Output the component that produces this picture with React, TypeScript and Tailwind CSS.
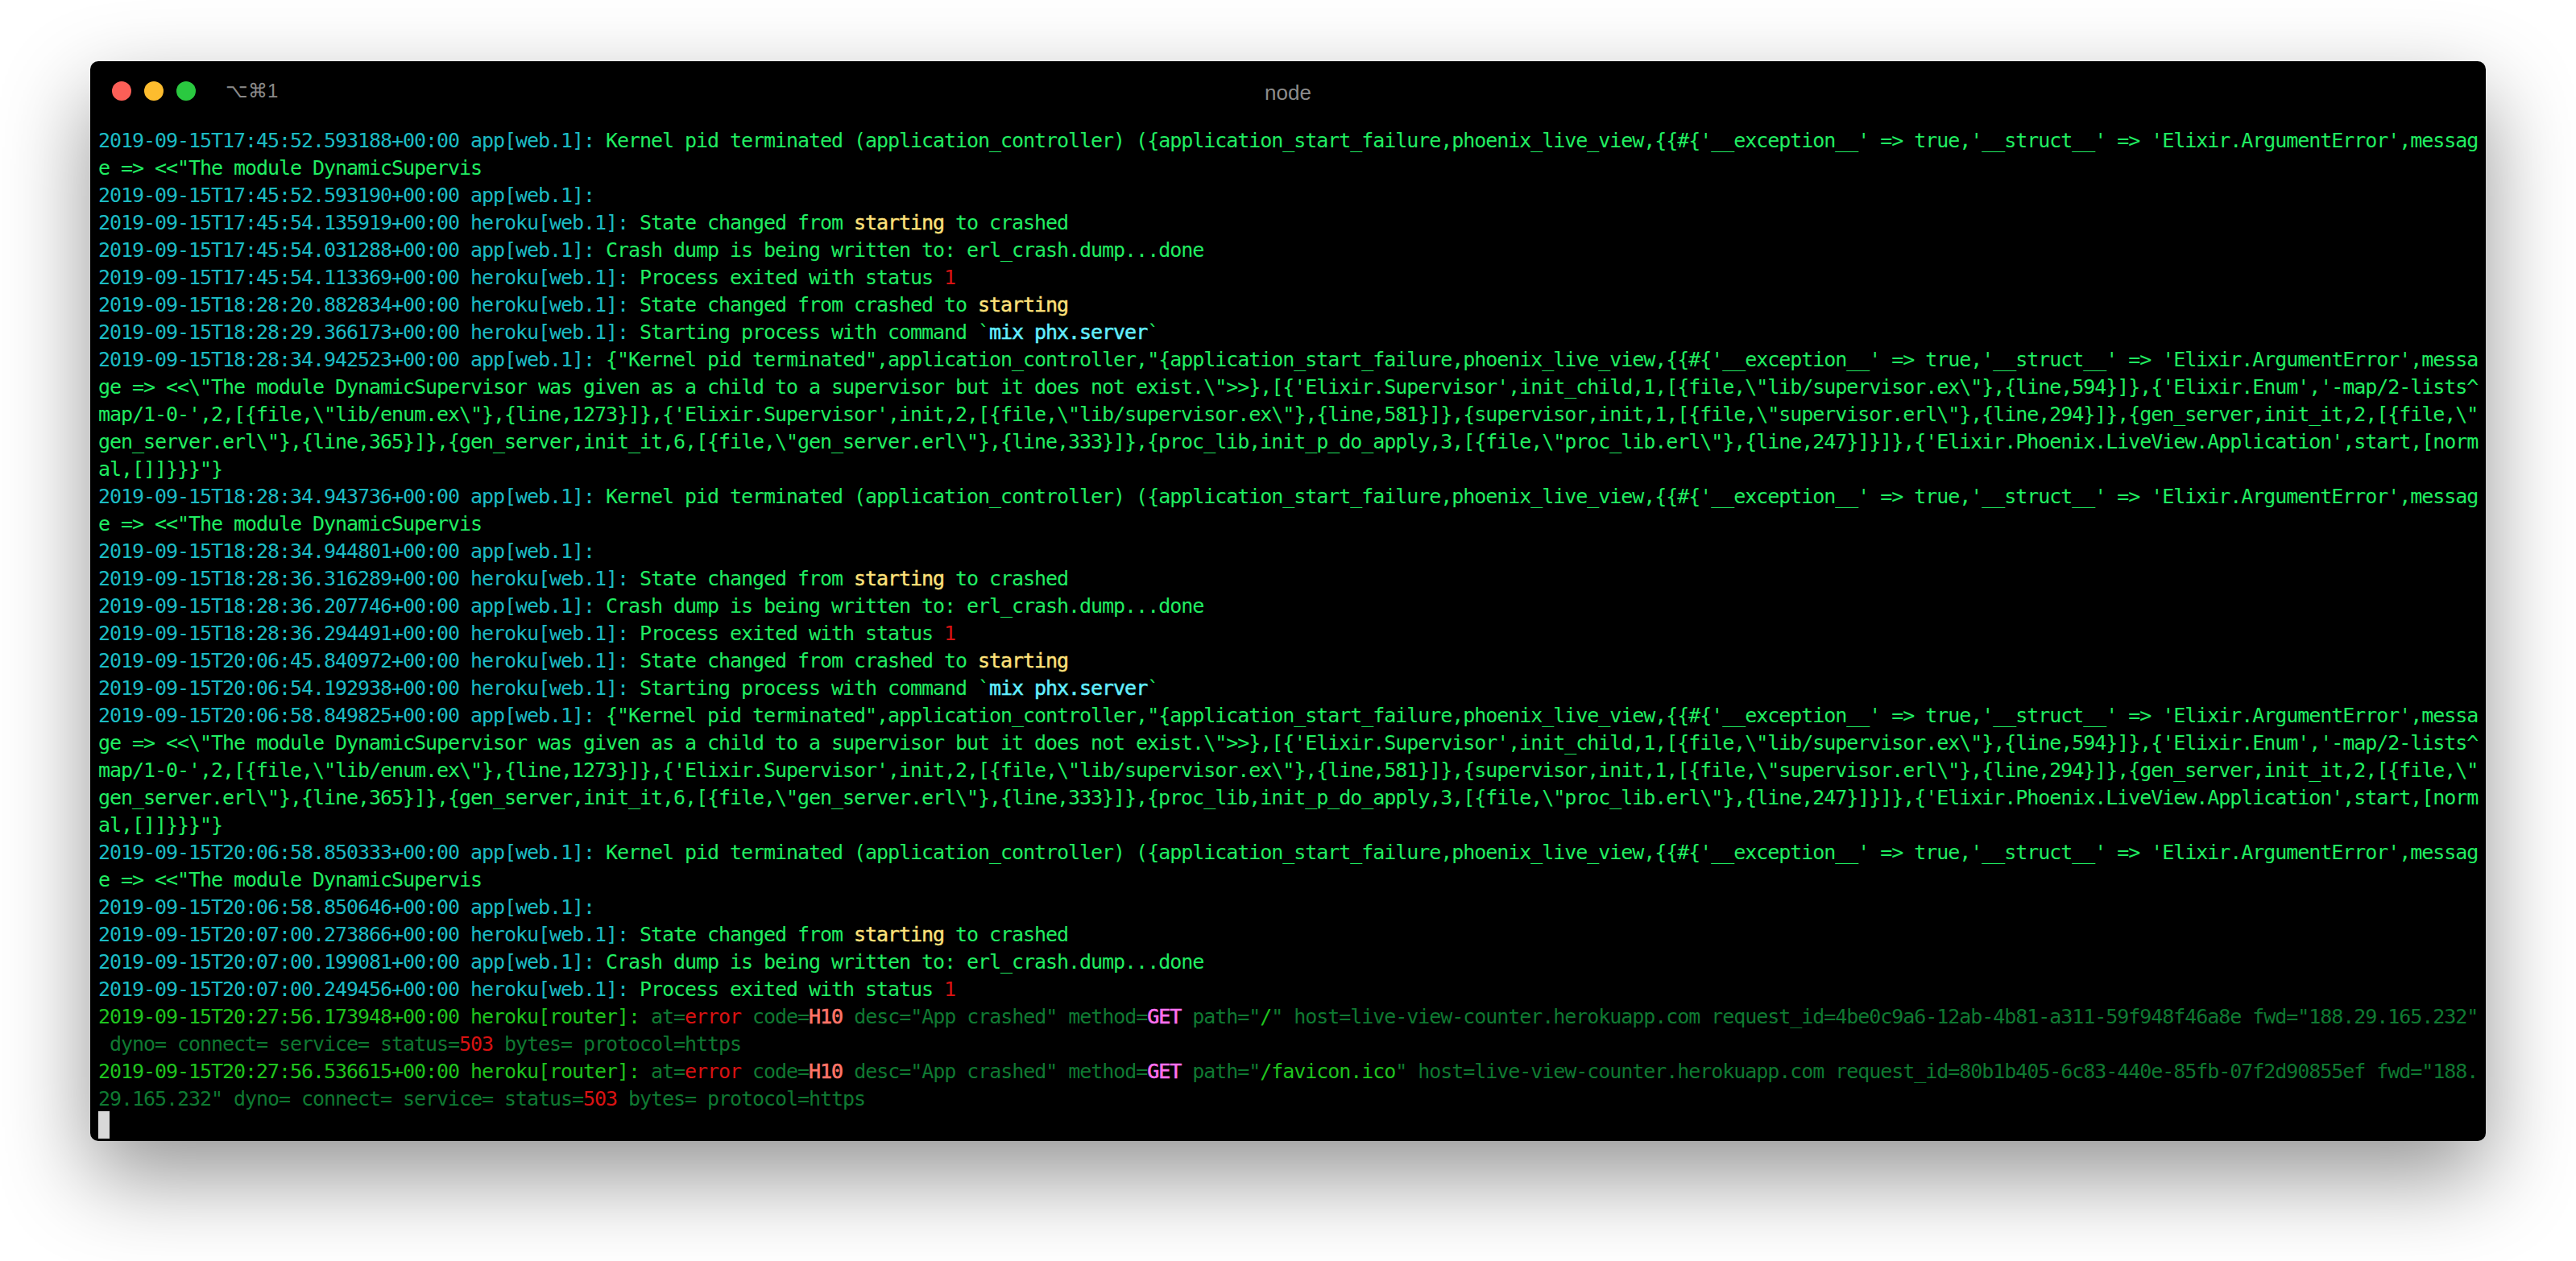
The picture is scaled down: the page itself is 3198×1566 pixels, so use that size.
const Ts = ({ children, dim }: { children: React.ReactNode; dim?: boolean }) => (
  <span className={dim ? 'text-[#1fc41f]' : 'text-[#1cbcc4]'}>{children}</span>
);

const Y = ({ children }: { children: React.ReactNode }) => (
  <span className="text-[#ffe27a] [-webkit-text-stroke:0.4px_#ffe27a]">{children}</span>
);
const R = ({ children }: { children: React.ReactNode }) => (
  <span className="text-[#d81212]">{children}</span>
);
const B = ({ children }: { children: React.ReactNode }) => (
  <span className="text-[#62eeff] [-webkit-text-stroke:0.5px_#62eeff]">{children}</span>
);
const H = ({ children }: { children: React.ReactNode }) => (
  <span className="text-[#ff7468] [-webkit-text-stroke:0.6px_#ff7468]">{children}</span>
);
const G = ({ children }: { children: React.ReactNode }) => (
  <span className="text-[#ff70f0] [-webkit-text-stroke:0.6px_#ff70f0]">{children}</span>
);

const Line = ({ children, dim }: { children: React.ReactNode; dim?: boolean }) => (
  <div className={`h-[34px] whitespace-pre ${dim ? 'text-[#0f7a32]' : 'text-[#20ee62]'}`}>{children}</div>
);

const kernelOne = " Kernel pid terminated (application_controller) ({application_start_failure,phoenix_live_view,{{#{'__exception__' => true,'__struct__' => 'Elixir.ArgumentError',messag";
const kernelBlock = (
  <>
    <Line>{`ge => <<\\"The module DynamicSupervisor was given as a child to a supervisor but it does not exist.\\">>},[{'Elixir.Supervisor',init_child,1,[{file,\\"lib/supervisor.ex\\"},{line,594}]},{'Elixir.Enum','-map/2-lists^`}</Line>
    <Line>{`map/1-0-',2,[{file,\\"lib/enum.ex\\"},{line,1273}]},{'Elixir.Supervisor',init,2,[{file,\\"lib/supervisor.ex\\"},{line,581}]},{supervisor,init,1,[{file,\\"supervisor.erl\\"},{line,294}]},{gen_server,init_it,2,[{file,\\"`}</Line>
    <Line>{`gen_server.erl\\"},{line,365}]},{gen_server,init_it,6,[{file,\\"gen_server.erl\\"},{line,333}]},{proc_lib,init_p_do_apply,3,[{file,\\"proc_lib.erl\\"},{line,247}]}]},{'Elixir.Phoenix.LiveView.Application',start,[norm`}</Line>
    <Line>{`al,[]]}}}"}`}</Line>
  </>
);
const kernelTwo = ` {"Kernel pid terminated",application_controller,"{application_start_failure,phoenix_live_view,{{#{'__exception__' => true,'__struct__' => 'Elixir.ArgumentError',messa`;

export default function App() {
  return (
    <div className="min-h-[1566px] w-[3198px] overflow-hidden bg-white pl-[112px] pt-[76px]">
      <div className="h-[1341px] w-[2974px] rounded-[10px] bg-black shadow-[0_44px_110px_rgba(0,0,0,0.42)] font-['DejaVu_Sans_Mono',monospace] text-[25px] tracking-[-1.05px]">
        <div className="flex h-[80px] items-center pl-[27px] pb-[6px] relative">
          <div className="flex gap-[16px]">
            <span className="size-6 rounded-full bg-[#fc5f57]" />
            <span className="size-6 rounded-full bg-[#fdbc2e]" />
            <span className="size-6 rounded-full bg-[#2ac940]" />
          </div>
          <span className="ml-[37px] font-['Liberation_Sans',sans-serif] text-[24px] leading-[30px] tracking-normal text-[#8a8a8a]">⌥⌘1</span>
          <span className="absolute left-0 right-0 top-[20px] text-center font-['Liberation_Sans',sans-serif] text-[26px] tracking-normal text-[#8c8c8c]">node</span>
        </div>
        <div className="pl-[10px] leading-[38px]">
          <Line><Ts>2019-09-15T17:45:52.593188+00:00 app[web.1]:</Ts>{kernelOne}</Line>
          <Line>{`e => <<"The module DynamicSupervis`}</Line>
          <Line><Ts>2019-09-15T17:45:52.593190+00:00 app[web.1]:</Ts></Line>
          <Line><Ts>2019-09-15T17:45:54.135919+00:00 heroku[web.1]:</Ts> State changed from <Y>starting</Y> to crashed</Line>
          <Line><Ts>2019-09-15T17:45:54.031288+00:00 app[web.1]:</Ts> Crash dump is being written to: erl_crash.dump...done</Line>
          <Line><Ts>2019-09-15T17:45:54.113369+00:00 heroku[web.1]:</Ts> Process exited with status <R>1</R></Line>
          <Line><Ts>2019-09-15T18:28:20.882834+00:00 heroku[web.1]:</Ts> State changed from crashed to <Y>starting</Y></Line>
          <Line><Ts>2019-09-15T18:28:29.366173+00:00 heroku[web.1]:</Ts> Starting process with command `<B>mix phx.server</B>`</Line>
          <Line><Ts>2019-09-15T18:28:34.942523+00:00 app[web.1]:</Ts>{kernelTwo}</Line>
          {kernelBlock}
          <Line><Ts>2019-09-15T18:28:34.943736+00:00 app[web.1]:</Ts>{kernelOne}</Line>
          <Line>{`e => <<"The module DynamicSupervis`}</Line>
          <Line><Ts>2019-09-15T18:28:34.944801+00:00 app[web.1]:</Ts></Line>
          <Line><Ts>2019-09-15T18:28:36.316289+00:00 heroku[web.1]:</Ts> State changed from <Y>starting</Y> to crashed</Line>
          <Line><Ts>2019-09-15T18:28:36.207746+00:00 app[web.1]:</Ts> Crash dump is being written to: erl_crash.dump...done</Line>
          <Line><Ts>2019-09-15T18:28:36.294491+00:00 heroku[web.1]:</Ts> Process exited with status <R>1</R></Line>
          <Line><Ts>2019-09-15T20:06:45.840972+00:00 heroku[web.1]:</Ts> State changed from crashed to <Y>starting</Y></Line>
          <Line><Ts>2019-09-15T20:06:54.192938+00:00 heroku[web.1]:</Ts> Starting process with command `<B>mix phx.server</B>`</Line>
          <Line><Ts>2019-09-15T20:06:58.849825+00:00 app[web.1]:</Ts>{kernelTwo}</Line>
          {kernelBlock}
          <Line><Ts>2019-09-15T20:06:58.850333+00:00 app[web.1]:</Ts>{kernelOne}</Line>
          <Line>{`e => <<"The module DynamicSupervis`}</Line>
          <Line><Ts>2019-09-15T20:06:58.850646+00:00 app[web.1]:</Ts></Line>
          <Line><Ts>2019-09-15T20:07:00.273866+00:00 heroku[web.1]:</Ts> State changed from <Y>starting</Y> to crashed</Line>
          <Line><Ts>2019-09-15T20:07:00.199081+00:00 app[web.1]:</Ts> Crash dump is being written to: erl_crash.dump...done</Line>
          <Line><Ts>2019-09-15T20:07:00.249456+00:00 heroku[web.1]:</Ts> Process exited with status <R>1</R></Line>
          <Line dim><Ts dim>2019-09-15T20:27:56.173948+00:00 heroku[router]:</Ts> at=<R>error</R> code=<H>H10</H> desc="App crashed" method=<G>GET</G> path="<Ts dim>/</Ts>" host=live-view-counter.herokuapp.com request_id=4be0c9a6-12ab-4b81-a311-59f948f46a8e fwd="188.29.165.232"</Line>
          <Line dim> dyno= connect= service= status=<R>503</R> bytes= protocol=https</Line>
          <Line dim><Ts dim>2019-09-15T20:27:56.536615+00:00 heroku[router]:</Ts> at=<R>error</R> code=<H>H10</H> desc="App crashed" method=<G>GET</G> path="<Ts dim>/favicon.ico</Ts>" host=live-view-counter.herokuapp.com request_id=80b1b405-6c83-440e-85fb-07f2d90855ef fwd="188.</Line>
          <Line dim>29.165.232" dyno= connect= service= status=<R>503</R> bytes= protocol=https</Line>
          <div className="h-[34px] w-[14px] bg-[#d8d8d8]" />
        </div>
      </div>
    </div>
  );
}
